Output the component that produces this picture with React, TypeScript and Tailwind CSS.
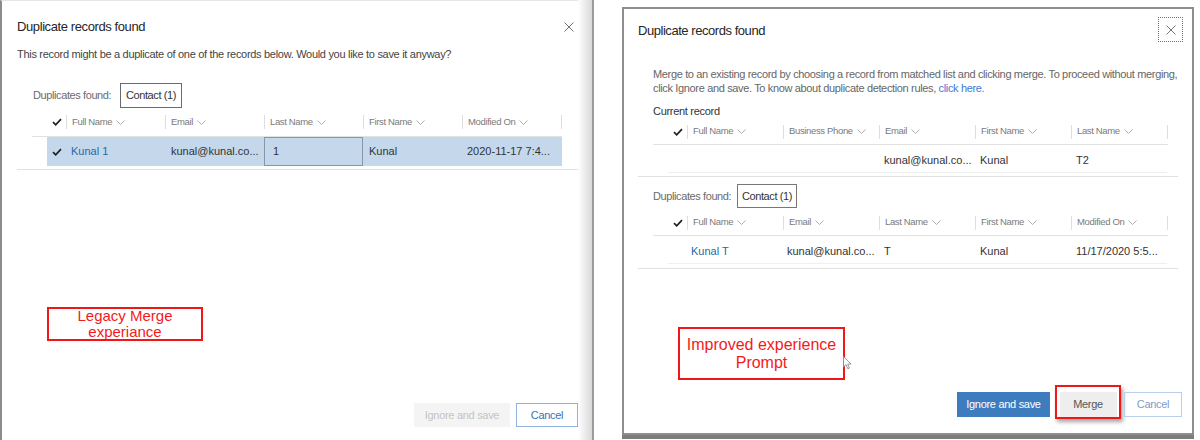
import React from "react";

const ui = "font-['Liberation_Sans',Arial,sans-serif]";

function Check() {
  return (
    <svg width="10" height="8" viewBox="0 0 10 8" className="shrink-0">
      <path d="M1 4.2 3.7 6.8 9 1.2" fill="none" stroke="#1f1f1f" strokeWidth="1.7" />
    </svg>
  );
}

function Chevron() {
  return (
    <svg width="9" height="5" viewBox="0 0 9 5" className="ml-[4px] shrink-0">
      <path d="M0.5 0.5 4.5 4.5 8.5 0.5" fill="none" stroke="#a6a6a6" strokeWidth="0.9" />
    </svg>
  );
}

function CloseX({ color = "#707070" }: { color?: string }) {
  return (
    <svg width="10" height="10" viewBox="0 0 10 10">
      <path d="M0.5 0.5 9.5 9.5 M9.5 0.5 0.5 9.5" fill="none" stroke={color} strokeWidth="1" />
    </svg>
  );
}

function GridHeader({
  cols,
  rowClass,
  colClass,
}: {
  cols: string[];
  rowClass: string;
  colClass: string;
}) {
  return (
    <div className={`flex items-center border-b border-[#e1e1e1] ${rowClass}`}>
      <div className="w-[34px] flex justify-end pr-[4px]">
        <Check />
      </div>
      {cols.map((c) => (
        <div key={c} className={`flex items-center ${colClass}`}>
          <span className="w-px h-[14px] bg-[#dedede]" />
          <span className="ml-[5px] text-[9.5px] tracking-[-0.35px] text-[#7a7a7a] whitespace-nowrap">{c}</span>
          <Chevron />
        </div>
      ))}
      <span className="w-px h-[14px] bg-[#dedede]" />
    </div>
  );
}

function LegacyPanel() {
  return (
    <div className="w-[578px] h-full shrink-0 flex flex-col border-l-2 border-l-[#8c8c8c] border-t border-t-[#e6e6e6] bg-white">
      <div className="mt-[16px] h-[20px] flex items-center justify-between pl-[15px] pr-[4px]">
        <span className="text-[13px] tracking-[-0.4px] text-[#262626]">Duplicate records found</span>
        <CloseX />
      </div>
      <p className="mt-[9px] pl-[15px] text-[11px] tracking-[-0.3px] leading-[16px] text-[#444] whitespace-nowrap">
        This record might be a duplicate of one of the records below. Would you like to save it anyway?
      </p>

      <div className="mt-[21px] h-[25px] pl-[31px] flex items-center text-[11px] tracking-[-0.4px]">
        <span className="w-[87px] text-[#6b6b6b] whitespace-nowrap">Duplicates found:</span>
        <span className="w-[62px] h-[25px] border border-[#6a6a6a] flex items-center justify-center text-[#333] whitespace-nowrap">
          Contact (1)
        </span>
      </div>

      <GridHeader
        cols={["Full Name", "Email", "Last Name", "First Name", "Modified On"]}
        rowClass="ml-[30px] w-[530px] h-[29px]"
        colClass="w-[99px]"
      />

      <div className="ml-[45px] w-[515px] h-[29px] flex items-center bg-[#c5d8eb] text-[11px] text-[#333]">
        <div className="w-[19px] flex justify-end pr-[4px]">
          <Check />
        </div>
        <div className="w-[99px] pl-[5px] text-[#2c66a6]">Kunal 1</div>
        <div className="w-[99px] pl-[6px] whitespace-nowrap">kunal@kunal.co...</div>
        <div className="w-[99px] h-full border border-[#8796a9] pl-[8px] flex items-center">1</div>
        <div className="w-[99px] pl-[6px]">Kunal</div>
        <div className="w-[99px] pl-[5px] whitespace-nowrap">2020-11-17 7:4...</div>
      </div>
      <div className="mt-[3px] ml-[15px] border-t border-[#e1e1e1]" />

      <div className="mt-[137px] ml-[45px] w-[156px] h-[34px] border-2 border-[#f21616] flex flex-col items-center justify-center text-[15px] leading-[16px] text-[#f51a1a]">
        <span>Legacy Merge</span>
        <span>experiance</span>
      </div>

      <div className="mt-[62px] flex justify-end gap-[6px] text-[11px] tracking-[-0.3px]">
        <button className="w-[96px] h-[24px] bg-[#f4f4f4] text-[#c4c4c4]">Ignore and save</button>
        <button className="w-[62px] h-[24px] border border-[#8fb3df] text-[#3a72b5]">Cancel</button>
      </div>
    </div>
  );
}

function ImprovedPanel() {
  return (
    <div className="w-[572px] shrink-0 flex flex-col">
      <div className="mt-[7px] h-[428px] border-2 border-[#8e8e8e] bg-white flex flex-col">
        <div className="mt-[8px] h-[25px] flex items-center justify-between pl-[14px] pr-[9px]">
          <span className="pt-[3px] text-[13px] tracking-[-0.45px] text-[#262626]">Duplicate records found</span>
          <span className="w-[25px] h-[25px] border border-dotted border-[#6f6f6f] flex items-center justify-center">
            <CloseX color="#777" />
          </span>
        </div>

        <div className="mt-[25px] pl-[29px] text-[11px] tracking-[-0.35px] leading-[14px] text-[#666]">
          <p className="whitespace-nowrap">
            Merge to an existing record by choosing a record from matched list and clicking merge. To proceed without
            merging,
          </p>
          <p className="whitespace-nowrap">
            click Ignore and save. To know about duplicate detection rules,{" "}
            <span className="text-[#3d79d6]">click here.</span>
          </p>
        </div>

        <p className="mt-[8px] pl-[29px] text-[11px] tracking-[-0.3px] leading-[16px] text-[#333]">Current record</p>

        <GridHeader
          cols={["Full Name", "Business Phone", "Email", "First Name", "Last Name"]}
          rowClass="ml-[29px] w-[515px] h-[26px]"
          colClass="w-[96px]"
        />
        <div className="ml-[44px] w-[499px] h-[28px] pt-[3px] flex items-center border-b border-[#efefef] text-[11px] text-[#333]">
          <div className="w-[19px]" />
          <div className="w-[96px]" />
          <div className="w-[96px]" />
          <div className="w-[96px] pl-[5px] whitespace-nowrap">kunal@kunal.co...</div>
          <div className="w-[96px] pl-[5px]">Kunal</div>
          <div className="w-[96px] pl-[5px]">T2</div>
        </div>
        <div className="mt-[3px] mx-[14px] border-t border-[#e1e1e1]" />

        <div className="mt-[7px] h-[24px] pl-[29px] flex items-center text-[11px] tracking-[-0.4px]">
          <span className="w-[84px] text-[#6b6b6b] whitespace-nowrap">Duplicates found:</span>
          <span className="w-[60px] h-[24px] border border-[#777] flex items-center justify-center text-[#333] whitespace-nowrap">
            Contact (1)
          </span>
        </div>

        <GridHeader
          cols={["Full Name", "Email", "Last Name", "First Name", "Modified On"]}
          rowClass="ml-[29px] w-[515px] h-[28px] pt-[2px]"
          colClass="w-[96px]"
        />
        <div className="ml-[44px] w-[499px] h-[28px] pt-[3px] flex items-center border-b border-[#efefef] text-[11px] text-[#333]">
          <div className="w-[19px]" />
          <div className="w-[96px] pl-[4px] text-[#2c66a6]">Kunal T</div>
          <div className="w-[96px] pl-[4px] whitespace-nowrap">kunal@kunal.co...</div>
          <div className="w-[96px] pl-[5px]">T</div>
          <div className="w-[96px] pl-[5px]">Kunal</div>
          <div className="w-[96px] pl-[5px] whitespace-nowrap">11/17/2020 5:5...</div>
        </div>
        <div className="mt-[4px] mx-[14px] border-t border-[#e1e1e1]" />

        <div className="mt-[58px] ml-[54px] w-[167px] h-[53px] border-2 border-[#f21616] flex flex-col items-center justify-center text-[16px] leading-[18px] text-[#f51a1a]">
          <span>Improved experience</span>
          <span>Prompt</span>
        </div>

        <div className="mt-[5px] h-[34px] flex items-start justify-end pr-[10px] text-[11px] tracking-[-0.3px]">
          <button className="mt-[7px] w-[93px] h-[25px] bg-[#3e7cc0] text-white">Ignore and save</button>
          <div className="ml-[5px] w-[66px] h-[34px] border-2 border-[#f21616] shadow-[2px_3px_4px_rgba(0,0,0,0.35)] flex justify-center pt-[5px]">
            <button className="w-[57px] h-[25px] bg-[#eeeeee] text-[#555]">Merge</button>
          </div>
          <button className="ml-[3px] mt-[7px] w-[58px] h-[25px] border border-[#b9d0ea] text-[#7d9dc8]">
            Cancel
          </button>
        </div>
      </div>
      <div className="h-[4px] bg-[#7c7c7c]" />
    </div>
  );
}

export default function App() {
  return (
    <div className={`relative w-[1200px] h-[440px] overflow-hidden bg-white flex ${ui}`}>
      <LegacyPanel />
      <div className="w-[14px] h-full shrink-0 bg-linear-to-r from-white to-[#d9d9d9]" />
      <div className="w-[2px] h-full shrink-0 bg-[#9c9c9c]" />
      <div className="w-[28px] h-full shrink-0" />
      <ImprovedPanel />

      <svg width="9" height="14" viewBox="0 0 9 14" className="absolute left-[843px] top-[356px]">
        <path d="M0.5 0.5 0.5 11 3 8.6 4.8 12.8 6.4 12.1 4.7 8.1 8 8.1Z" fill="#fff" stroke="#8a8a8a" strokeWidth="0.9" />
      </svg>
    </div>
  );
}
